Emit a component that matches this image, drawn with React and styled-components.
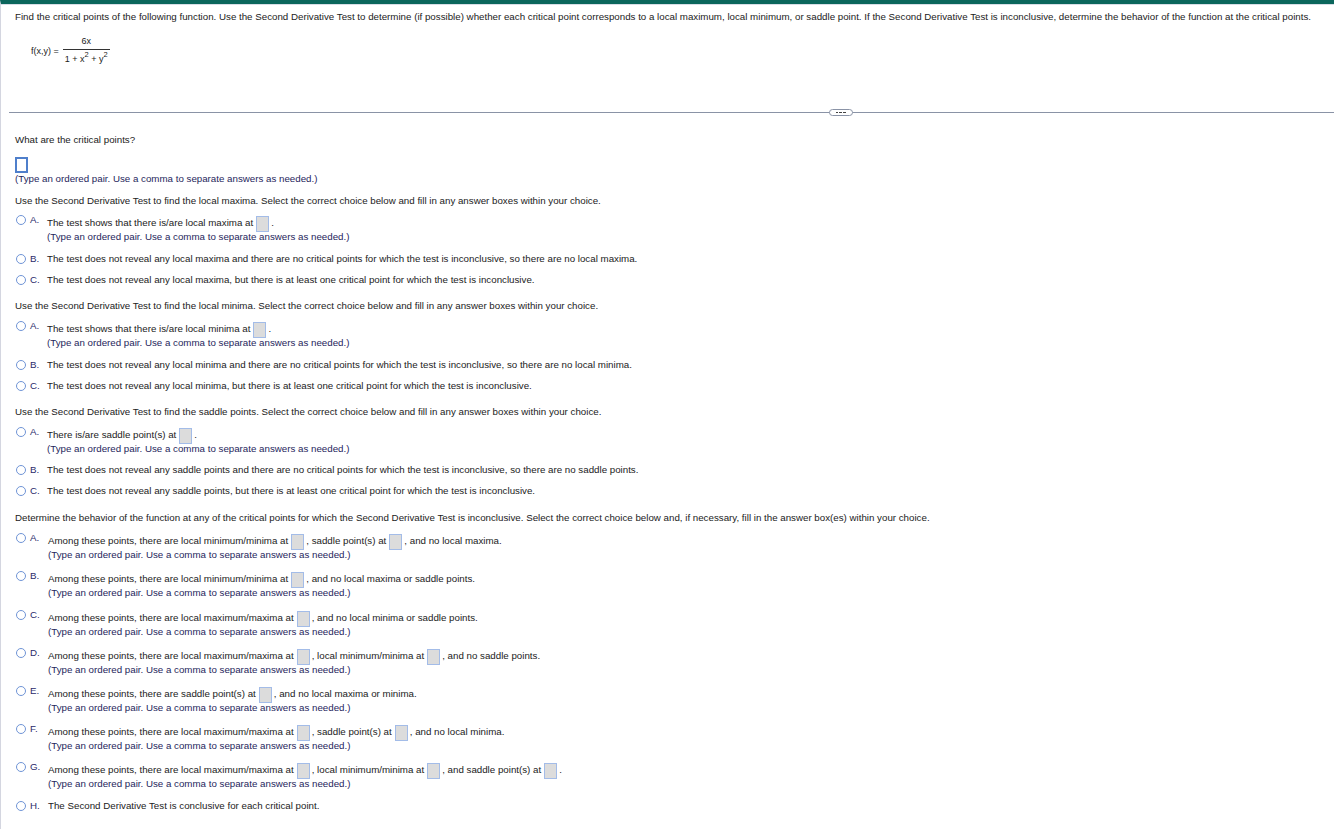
import React from 'react'
import styled, { createGlobalStyle } from 'styled-components'

const GlobalStyle = createGlobalStyle`
  html, body {
    margin: 0;
    padding: 0;
    background: #fff;
  }
  body {
    font-family: "Liberation Sans", Arial, sans-serif;
    font-size: 9.74px;
    line-height: 14px;
    color: #222;
  }
`

const Page = styled.div`
  width: 1334px;
  height: 829px;
  overflow: hidden;
  box-sizing: border-box;
  border-top: 4px solid #0b665c;
  border-left: 1px solid #d4d6e0;
  box-shadow: inset 0 1px 0 #d8dde6;
`

const Question = styled.div`
  padding: 6px 0 0 14px;
  height: 63px;
`

const Line = styled.div`
  white-space: nowrap;
  height: 14px;
  margin-top: ${(p) => p.$top || 0}px;
`

const Formula = styled.div`
  display: flex;
  align-items: center;
  margin: 10px 0 0 16px;
  font-size: 9px;
`

const Fraction = styled.div`
  display: flex;
  flex-direction: column;
  align-items: center;
  margin-left: 4px;
  width: 47px;
`

const Numerator = styled.div`
  height: 15px;
  line-height: 15px;
  width: 100%;
  text-align: center;
  border-bottom: 1px solid #333;
`

const Denominator = styled.div`
  height: 18px;
  line-height: 18px;
  white-space: nowrap;
  sup {
    font-size: 7.5px;
    line-height: 0;
    vertical-align: 5px;
  }
`

const DividerRow = styled.div`
  position: relative;
  margin: 39px 0 0 8px;
  height: 1px;
  background: #8a93a6;
`

const ExpandPill = styled.div`
  position: absolute;
  left: 820px;
  top: -3px;
  width: 24px;
  height: 7px;
  box-sizing: border-box;
  border: 1px solid #8a93a6;
  border-radius: 4px;
  background: #fff;
  display: flex;
  align-items: center;
  justify-content: center;
  gap: 1px;
`

const Dot = styled.span`
  width: ${(p) => (p.$wide ? 3 : 2)}px;
  height: 1px;
  background: #444;
`

const Body = styled.div`
  padding-left: 14px;
`

const BigBox = styled.div`
  width: 13px;
  height: 16px;
  margin-top: 10px;
  box-sizing: border-box;
  border: 2px solid #4f7fcb;
  background: #fff;
`

const Hint = styled.div`
  color: #26265c;
  white-space: nowrap;
  height: 14px;
  margin-top: ${(p) => p.$top || 0}px;
`

const Choice = styled.div`
  display: grid;
  grid-template-columns: 15px ${(p) => (p.$wideLabel ? 18 : 17)}px 1fr;
  margin-top: ${(p) => p.$top || 0}px;
  white-space: nowrap;
`

const Radio = styled.span`
  width: 10px;
  height: 10px;
  margin: ${(p) => (p.$raised ? 0 : 2)}px 0 0 1px;
  box-sizing: border-box;
  border: 1px solid #6f94d6;
  border-radius: 50%;
  background: #fff;
`

const Letter = styled.span`
  color: #2a2a6a;
  margin-top: ${(p) => (p.$raised ? -2 : 0)}px;
`

const ChoiceLine = styled.div`
  height: 15px;
  display: flex;
  align-items: center;
`

const AnswerBox = styled.span`
  display: inline-block;
  width: 13px;
  height: 16px;
  margin: 2px 2px 0 3px;
  flex: none;
  box-sizing: border-box;
  border: 1px solid #a3bce8;
  background: #dcdcdc;
`

const HINT = '(Type an ordered pair. Use a comma to separate answers as needed.)'

const testChoices = (word) => [
  { letter: 'A', parts: [`The test shows that there is/are local ${word} at`, '.'] },
  { letter: 'B', text: `The test does not reveal any local ${word} and there are no critical points for which the test is inconclusive, so there are no local ${word}.` },
  { letter: 'C', text: `The test does not reveal any local ${word}, but there is at least one critical point for which the test is inconclusive.` },
]

const sections = [
  {
    top: 8,
    firstTop: 7,
    restTop: 8,
    prompt: 'Use the Second Derivative Test to find the local maxima. Select the correct choice below and fill in any answer boxes within your choice.',
    choices: testChoices('maxima'),
  },
  {
    top: 12,
    firstTop: 8,
    restTop: 8,
    prompt: 'Use the Second Derivative Test to find the local minima. Select the correct choice below and fill in any answer boxes within your choice.',
    choices: testChoices('minima'),
  },
  {
    top: 12,
    firstTop: 8,
    restTop: 7,
    prompt: 'Use the Second Derivative Test to find the saddle points. Select the correct choice below and fill in any answer boxes within your choice.',
    choices: [
      { letter: 'A', parts: ['There is/are saddle point(s) at', '.'] },
      { letter: 'B', text: 'The test does not reveal any saddle points and there are no critical points for which the test is inconclusive, so there are no saddle points.' },
      { letter: 'C', text: 'The test does not reveal any saddle points, but there is at least one critical point for which the test is inconclusive.' },
    ],
  },
]

const behaviour = [
  { letter: 'A', top: 8, parts: ['Among these points, there are local minimum/minima at', ', saddle point(s) at', ', and no local maxima.'] },
  { letter: 'B', top: 9, parts: ['Among these points, there are local minimum/minima at', ', and no local maxima or saddle points.'] },
  { letter: 'C', top: 10, parts: ['Among these points, there are local maximum/maxima at', ', and no local minima or saddle points.'] },
  { letter: 'D', top: 9, parts: ['Among these points, there are local maximum/maxima at', ', local minimum/minima at', ', and no saddle points.'] },
  { letter: 'E', top: 9, parts: ['Among these points, there are saddle point(s) at', ', and no local maxima or minima.'] },
  { letter: 'F', top: 9, parts: ['Among these points, there are local maximum/maxima at', ', saddle point(s) at', ', and no local minima.'] },
  { letter: 'G', top: 9, parts: ['Among these points, there are local maximum/maxima at', ', local minimum/minima at', ', and saddle point(s) at', '.'] },
]

const WithBoxes = ({ parts }) => (
  <ChoiceLine>
    {parts.map((part, i) => (
      <React.Fragment key={i}>
        {i > 0 && <AnswerBox />}
        <span>{part}</span>
      </React.Fragment>
    ))}
  </ChoiceLine>
)

const BoxChoice = ({ letter, parts, top, wideLabel }) => (
  <Choice $top={top} $wideLabel={wideLabel}>
    <Radio $raised />
    <Letter $raised>{letter}.</Letter>
    <div>
      <WithBoxes parts={parts} />
      <Hint>{HINT}</Hint>
    </div>
  </Choice>
)

const TextChoice = ({ letter, text, top, wideLabel }) => (
  <Choice $top={top} $wideLabel={wideLabel}>
    <Radio />
    <Letter>{letter}.</Letter>
    <div>{text}</div>
  </Choice>
)

const App = () => (
  <Page>
    <GlobalStyle />
    <Question>
      <Line>
        Find the critical points of the following function. Use the Second Derivative Test to determine (if possible) whether each critical point corresponds to a local maximum, local minimum, or saddle point. If the Second Derivative Test is inconclusive, determine the behavior of the function at the critical points.
      </Line>
      <Formula>
        <span>f(x,y) =</span>
        <Fraction>
          <Numerator>6x</Numerator>
          <Denominator>1 + x<sup>2</sup> + y<sup>2</sup></Denominator>
        </Fraction>
      </Formula>
    </Question>
    <DividerRow>
      <ExpandPill>
        <Dot />
        <Dot $wide />
        <Dot $wide />
      </ExpandPill>
    </DividerRow>
    <Body>
      <Line $top={20}>What are the critical points?</Line>
      <BigBox />
      <Hint $top={-1}>{HINT}</Hint>
      {sections.map((s) => (
        <React.Fragment key={s.prompt}>
          <Line $top={s.top}>{s.prompt}</Line>
          <BoxChoice letter="A" parts={s.choices[0].parts} top={s.firstTop} />
          <TextChoice letter="B" text={s.choices[1].text} top={s.restTop} />
          <TextChoice letter="C" text={s.choices[2].text} top={7} />
        </React.Fragment>
      ))}
      <Line $top={13}>
        Determine the behavior of the function at any of the critical points for which the Second Derivative Test is inconclusive. Select the correct choice below and, if necessary, fill in the answer box(es) within your choice.
      </Line>
      {behaviour.map((c) => (
        <BoxChoice key={c.letter} letter={c.letter} parts={c.parts} top={c.top} wideLabel />
      ))}
      <TextChoice letter="H" text="The Second Derivative Test is conclusive for each critical point." top={8} wideLabel />
    </Body>
  </Page>
)

export default App
